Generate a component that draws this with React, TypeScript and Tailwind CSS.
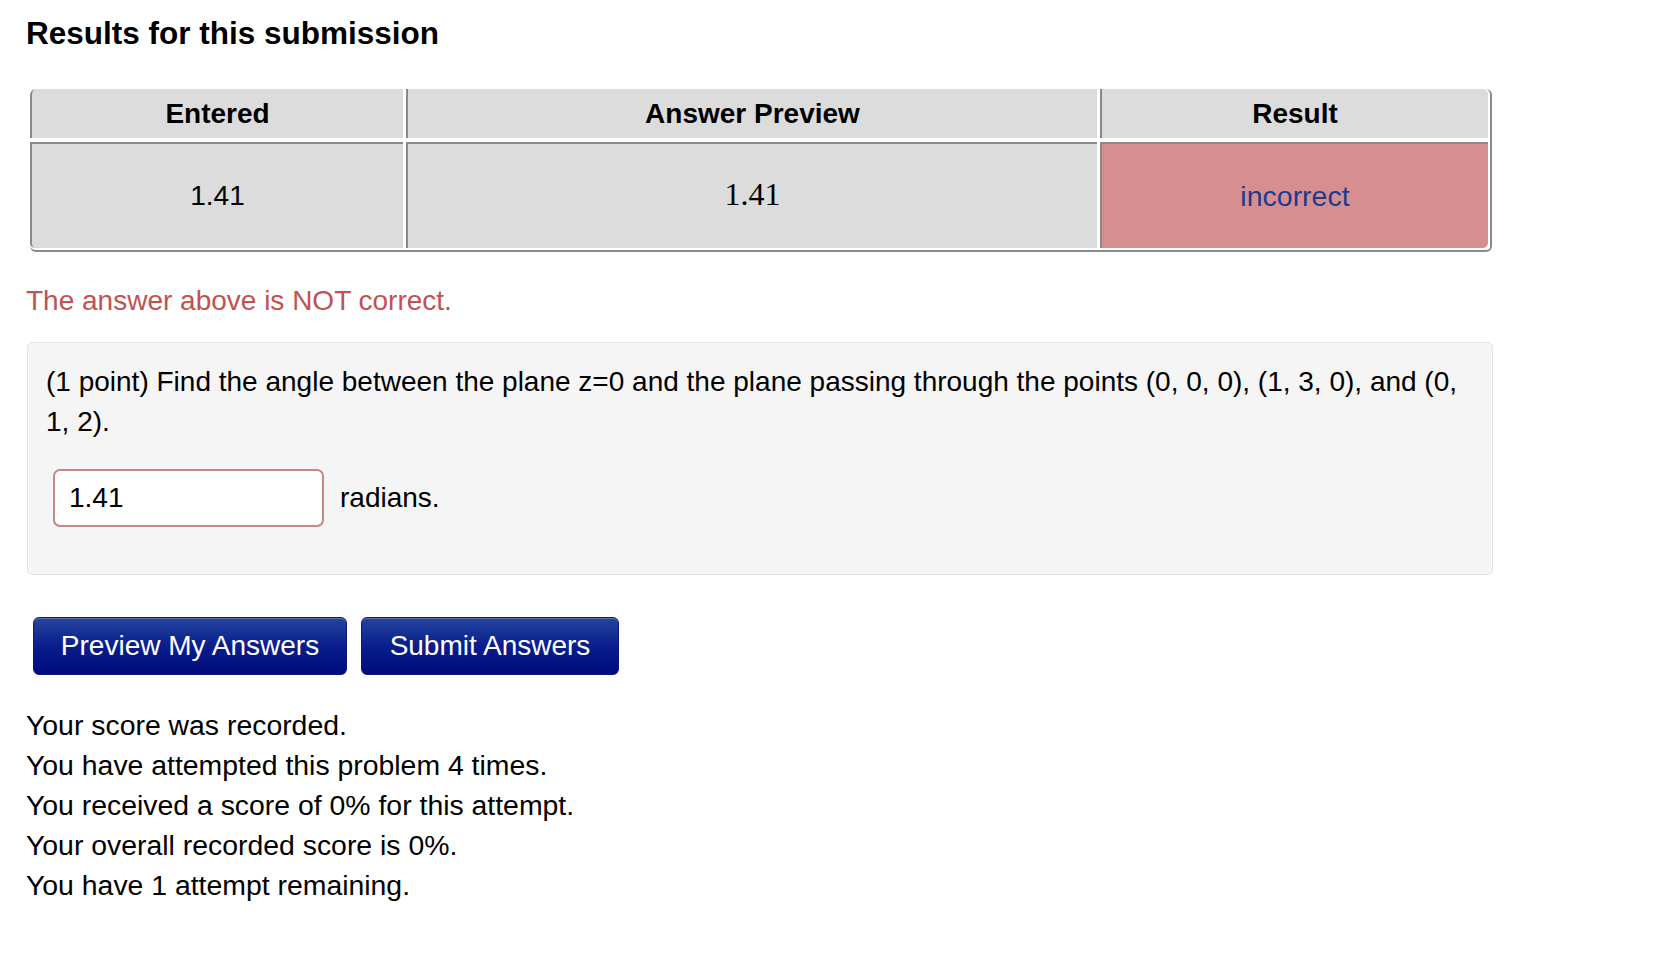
import React from "react";

export default function App() {
  const sans = { fontFamily: '"Liberation Sans", Arial, Helvetica, sans-serif' };
  return (
    <div
      className="min-h-[965px] w-full bg-white pl-[26px] pt-[15px] text-black"
      style={sans}
    >
      <h1 className="text-[31.5px] font-bold leading-[36px]">Results for this submission</h1>

      {/* Results table */}
      <div className="ml-[4px] mt-[38px] w-[1462px] rounded-[6px] border-b-2 border-r-2 border-[#8a8a8a] pb-[2px] pr-[2px]">
        <div className="grid grid-cols-[373px_691px_388px] gap-x-[3px] gap-y-[4px]">
          <div className="flex h-[49px] items-center justify-center rounded-tl-[6px] border-l-2 border-[#8a8a8a] bg-[#dcdcdc] text-[28px] font-bold">
            Entered
          </div>
          <div className="flex h-[49px] items-center justify-center border-l-2 border-[#8a8a8a] bg-[#dcdcdc] text-[28px] font-bold">
            Answer Preview
          </div>
          <div className="flex h-[49px] items-center justify-center rounded-tr-[5px] border-l-2 border-[#8a8a8a] bg-[#dcdcdc] text-[28px] font-bold">
            Result
          </div>

          <div className="flex h-[106px] items-center justify-center rounded-bl-[5px] border-l-2 border-t-2 border-[#8a8a8a] bg-[#dcdcdc] text-[28px]">
            1.41
          </div>
          <div
            className="flex h-[106px] items-center justify-center border-l-2 border-t-2 border-[#8a8a8a] bg-[#dcdcdc] pb-[5px] text-[32px]"
            style={{ fontFamily: '"Liberation Serif", "Times New Roman", serif' }}
          >
            1.41
          </div>
          <div className="flex h-[106px] items-center justify-center rounded-br-[5px] border-l-2 border-t-2 border-[#8a8a8a] bg-[#d68f8f] text-[28.5px] text-[#1d3a8f]">
            incorrect
          </div>
        </div>
      </div>

      <p className="mt-[29px] text-[28px] leading-[40px] text-[#c3514f]">The answer above is NOT correct.</p>

      {/* Problem box */}
      <div className="ml-[1px] mt-[21px] w-[1466px] rounded-[5px] border border-[#e3e3e3] bg-[#f5f5f5] pb-[47px] pl-[18px] pr-[10px] pt-[19px]">
        <p className="text-[28px] leading-[40px]">
          (1 point) Find the angle between the plane z=0 and the plane passing through the points (0, 0, 0), (1, 3, 0), and (0, 1, 2).
        </p>
        <div className="mt-[27px] flex items-center gap-[16px] pl-[7px]">
          <div className="flex h-[58px] w-[271px] items-center rounded-[7px] border-2 border-[#c98686] bg-white pl-[14px] text-[28px]">
            1.41
          </div>
          <span className="text-[28px]">radians.</span>
        </div>
      </div>

      {/* Buttons */}
      <div className="mt-[42px] flex gap-[14px] pl-[7px]">
        <button
          className="h-[58px] w-[314px] rounded-[6px] border border-[#0b1a70] bg-linear-to-b from-[#25439f] via-[#0a1d8c] to-[#000a7e] text-[28px] text-white shadow-[inset_0_1px_0_rgba(255,255,255,0.25)]"
          style={sans}
        >
          Preview My Answers
        </button>
        <button
          className="h-[58px] w-[258px] rounded-[6px] border border-[#0b1a70] bg-linear-to-b from-[#25439f] via-[#0a1d8c] to-[#000a7e] text-[28px] text-white shadow-[inset_0_1px_0_rgba(255,255,255,0.25)]"
          style={sans}
        >
          Submit Answers
        </button>
      </div>

      {/* Status messages */}
      <div className="mt-[30px] text-[28.4px] leading-[40px]">
        <div>Your score was recorded.</div>
        <div>You have attempted this problem 4 times.</div>
        <div>You received a score of 0% for this attempt.</div>
        <div>Your overall recorded score is 0%.</div>
        <div>You have 1 attempt remaining.</div>
      </div>
    </div>
  );
}
